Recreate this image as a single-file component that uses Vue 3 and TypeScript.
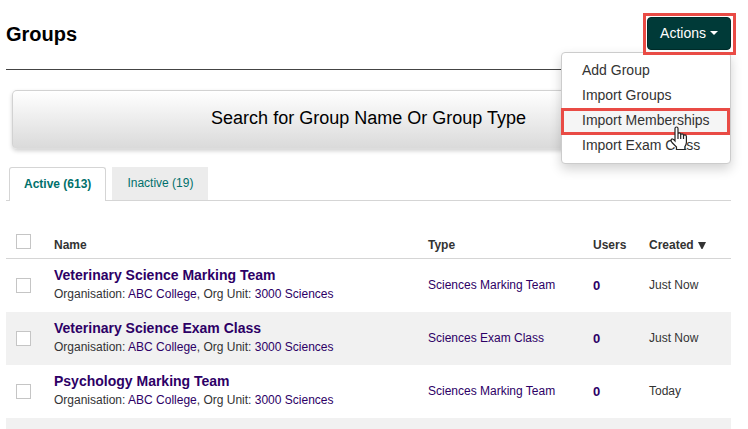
<script setup lang="ts">
import { ref } from 'vue'

interface Group {
  id: number
  name: string
  type: string
  users: number
  created: string
}

const actions: string[] = ['Add Group', 'Import Groups', 'Import Memberships', 'Import Exam Class']
const highlighted = ref('Import Memberships')
const menuOpen = ref(true)
const activeTab = ref('Active')
const tabs = [
  { name: 'Active', count: 613 },
  { name: 'Inactive', count: 19 },
]
const groups: Group[] = [
  { id: 1, name: 'Veterinary Science Marking Team', type: 'Sciences Marking Team', users: 0, created: 'Just Now' },
  { id: 2, name: 'Veterinary Science Exam Class', type: 'Sciences Exam Class', users: 0, created: 'Just Now' },
  { id: 3, name: 'Psychology Marking Team', type: 'Sciences Marking Team', users: 0, created: 'Today' },
]
</script>

<template>
  <main class="page">
    <header class="page-header">
      <h1>Groups</h1>
      <div class="actions">
        <div class="callout">
          <button type="button" class="actions-button" :aria-expanded="menuOpen" @click="menuOpen = !menuOpen">
            Actions <span class="caret"></span>
          </button>
        </div>
        <ul v-if="menuOpen" class="menu">
          <li v-for="action in actions" :key="action" :class="{ marked: action === highlighted }">
            <a href="#">{{ action }}</a>
            <svg v-if="action === highlighted" class="pointer" viewBox="0 0 18 25" aria-hidden="true">
              <path
                d="M5 2.5Q5 1 6.500 1T8 2.500V8Q8 6.800 9.200 6.800T10.700 8.300V9Q10.700 7.800 12 7.800T13.500 9.200V10Q13.500 8.900 14.900 8.900T16.400 10.500V16.500Q16.400 18.500 14.900 20.500V23.500H6.500V21L2 16.500Q.6 14.600 1.200 13.600Q2.300 12.300 3.800 13.700L5 15Z"
              />
              <path d="M8 8V13M10.700 9V13M13.500 10V13" />
            </svg>
          </li>
        </ul>
      </div>
    </header>

    <button type="button" class="search">Search for Group Name Or Group Type</button>

    <nav class="tabs">
      <a
        v-for="tab in tabs"
        :key="tab.name"
        href="#"
        class="tab"
        :class="{ active: tab.name === activeTab }"
        @click.prevent="activeTab = tab.name"
      >{{ tab.name }} ({{ tab.count }})</a>
    </nav>

    <table class="groups">
      <colgroup>
        <col class="col-check" />
        <col />
        <col class="col-type" />
        <col class="col-users" />
        <col class="col-created" />
      </colgroup>
      <thead>
        <tr>
          <th class="check"><input type="checkbox" aria-label="Select all groups" /></th>
          <th>Name</th>
          <th>Type</th>
          <th>Users</th>
          <th>
            Created
            <svg class="sort" viewBox="0 0 8 7" aria-hidden="true"><path d="M0 0H8L4.500 7H3.500Z" /></svg>
          </th>
        </tr>
      </thead>
      <tbody>
        <tr v-for="group in groups" :key="group.id">
          <td class="check"><input type="checkbox" :aria-label="group.name" /></td>
          <td class="summary">
            <a href="#" class="name">{{ group.name }}</a>
            <div class="detail">
              Organisation: <a href="#">ABC College</a>, Org Unit: <a href="#">3000 Sciences</a>
            </div>
          </td>
          <td><a href="#">{{ group.type }}</a></td>
          <td><a href="#" class="count">{{ group.users }}</a></td>
          <td>{{ group.created }}</td>
        </tr>
        <tr>
          <td colspan="5"></td>
        </tr>
      </tbody>
    </table>
  </main>
</template>

<style>
body {
  background: #fff;
}
</style>

<style scoped>
.page {
  box-sizing: border-box;
  height: 100vh;
  overflow: hidden;
  padding: 0 17px 0 6px;
  font-family: 'Liberation Sans', Arial, sans-serif;
  font-size: 12px;
  color: #333;
}
a {
  color: #2d0066;
  text-decoration: none;
}
.page-header {
  display: flex;
  justify-content: space-between;
  align-items: center;
  box-sizing: border-box;
  height: 70px;
  padding-bottom: 2px;
  border-bottom: 1px solid #444;
}
h1 {
  margin: 0;
  font-size: 20px;
  line-height: 24px;
  color: #000;
}
.actions {
  position: relative;
}
.callout {
  position: relative;
  z-index: 2;
  margin-right: -5px;
  padding: 1px 2px 2px 1px;
  border: 3px solid #e94b45;
}
.actions-button {
  display: flex;
  align-items: center;
  gap: 4px;
  height: 33px;
  padding: 0 12px;
  border: 1px solid #002b29;
  border-radius: 4px;
  background: #003a38;
  color: #fff;
  font: 14px/20px 'Liberation Sans', Arial, sans-serif;
}
.caret {
  border: 4px solid transparent;
  border-top-color: #fff;
  border-bottom: 0;
}
.menu {
  position: absolute;
  top: 100%;
  right: 0;
  z-index: 1;
  box-sizing: border-box;
  width: 170px;
  margin: -3px 0 0;
  padding: 5px 0;
  list-style: none;
  border: 1px solid #ccc;
  border-radius: 4px;
  background: #fff;
  box-shadow: 0 5px 12px rgba(0, 0, 0, 0.18);
}
.menu li {
  position: relative;
}
.menu a {
  display: block;
  padding: 0 20px;
  font-size: 14px;
  line-height: 25px;
  color: #333;
}
.marked {
  z-index: 1;
  background: #f5f5f5;
}
.marked::after {
  content: '';
  position: absolute;
  inset: 0 0 -2px -1px;
  border: 3px solid #e94b45;
  pointer-events: none;
}
.pointer {
  position: absolute;
  top: 18px;
  left: 108px;
  z-index: 1;
  width: 18px;
  height: 25px;
  fill: #fff;
  stroke: #222;
  stroke-width: 1.2;
}
.search {
  display: block;
  width: calc(100% - 12px);
  height: 59px;
  margin: 20px 6px 18px;
  padding: 0 0 4px;
  border: 1px solid #d2d2d2;
  border-bottom-color: #ddd;
  border-radius: 5px;
  background: linear-gradient(#fff, #dadada);
  box-shadow: 0 2px 4px rgba(0, 0, 0, 0.18);
  color: #000;
  font: 18px/24px 'Liberation Sans', Arial, sans-serif;
}
.tabs {
  display: flex;
  gap: 6px;
  padding-left: 3px;
  border-bottom: 1px solid #d5d5d5;
}
.tab {
  padding: 0 15px;
  line-height: 33px;
  background: #ececec;
  color: #00706b;
}
.tab.active {
  margin-bottom: -1px;
  padding: 0 14px;
  border: 1px solid #d5d5d5;
  border-bottom: 0;
  border-radius: 3px 3px 0 0;
  background: #fff;
  font-weight: bold;
}
.groups {
  width: 100%;
  margin-top: 25px;
  table-layout: fixed;
  border-collapse: separate;
  border-spacing: 0;
}
.col-check {
  width: 48px;
}
.col-type {
  width: 165px;
}
.col-users {
  width: 56px;
}
.col-created {
  width: 82px;
}
th {
  height: 26px;
  padding: 6px 0 0;
  border-bottom: 1px solid #d5d5d5;
  text-align: left;
  color: #333;
}
td {
  height: 52px;
  padding: 0 0 1px;
}
tbody tr:nth-child(even) {
  background: #f1f1f1;
}
.check {
  height: 33px;
  padding: 0 0 0 10px;
}
th.check {
  height: 30px;
  padding-bottom: 2px;
}
.check input {
  display: block;
  appearance: none;
  box-sizing: border-box;
  width: 15px;
  height: 15px;
  margin: 0;
  border: 1px solid #c5c5c5;
  background: #fff;
}
.summary {
  height: 50px;
  padding-bottom: 3px;
}
.name {
  font-size: 14px;
  font-weight: bold;
  line-height: 20px;
}
.detail {
  line-height: 19px;
}
.count {
  font-size: 13px;
  font-weight: bold;
}
.sort {
  width: 8px;
  height: 7px;
  margin-left: 1px;
  fill: #333;
}
</style>
